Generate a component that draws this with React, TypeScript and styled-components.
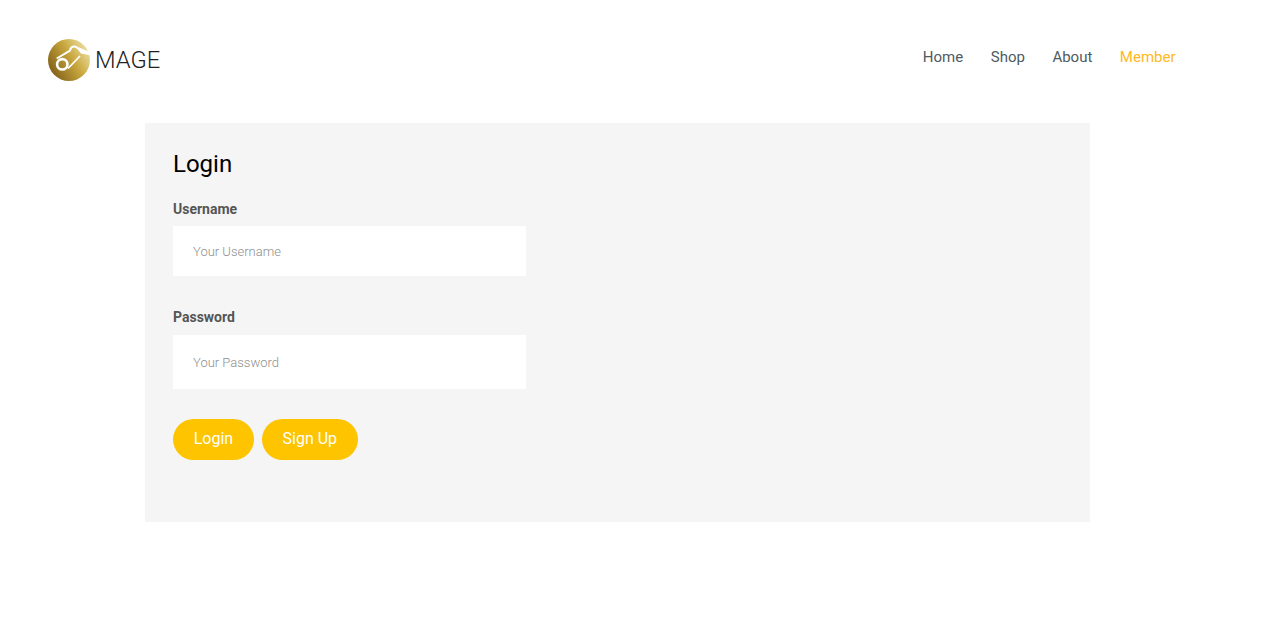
import React from "react";
import styled, { createGlobalStyle } from "styled-components";

const Global = createGlobalStyle`
  html, body { margin: 0; padding: 0; background: #fff; }
  body { font-family: Roboto, "Liberation Sans", sans-serif; }
  * { box-sizing: border-box; }
`;

const Page = styled.div`
  width: 1280px;
  height: 623px;
  overflow: hidden;
  background: #fff;
`;

const Header = styled.header`
  height: 123px;
  padding: 39px 104.5px 0 48px;
  display: flex;
  justify-content: space-between;
  align-items: flex-start;
`;

const Logo = styled.div`
  display: flex;
  align-items: center;
  gap: 5px;
  height: 42px;
`;

const LogoWord = styled.span`
  font-size: 23.8px;
  font-weight: 300;
  color: #222;
  line-height: 44px;
`;

const Nav = styled.nav`
  display: flex;
  gap: 27.5px;
  padding-top: 8px;
`;

const NavLink = styled.a<{ $active?: boolean }>`
  font-size: 15px;
  line-height: 20px;
  color: ${(p) => (p.$active ? "#ffb822" : "#4f5a62")};
`;

const Card = styled.main`
  width: 945px;
  height: 399px;
  margin-left: 145px;
  padding: 26px 28px 0;
  background: #f5f5f5;
`;

const Title = styled.h1`
  margin: 0 0 20px;
  font-size: 24px;
  font-weight: 400;
  line-height: 30px;
  color: #000;
`;

const Label = styled.label`
  display: block;
  font-size: 14px;
  font-weight: 700;
  line-height: 20px;
  color: #555;
  margin-bottom: 8px;
`;

const UsernameLabel = styled(Label)`
  margin-bottom: 7px;
`;

const Field = styled.div<{ $gap: number }>`
  margin-bottom: ${(p) => p.$gap}px;
`;

const Input = styled.input<{ $h: number }>`
  display: block;
  width: 353px;
  height: ${(p) => p.$h}px;
  padding: 0 20px;
  border: 0;
  outline: 0;
  background: #fff;
  font-family: Roboto, sans-serif;
  font-size: 13px;
  font-weight: 300;
  &::placeholder { color: #8f8f8f; opacity: 1; }
`;

const Buttons = styled.div`
  display: flex;
  gap: 8px;
`;

const Button = styled.button`
  height: 41px;
  padding: 0 20.7px 2px;
  border: 0;
  border-radius: 21px;
  background: #ffc400;
  color: #fff;
  font-family: Roboto, sans-serif;
  font-size: 16px;
  font-weight: 400;
`;

const LogoMark = () => (
  <svg width="42" height="42" viewBox="0 0 42 42">
    <defs>
      <linearGradient id="g" x1="0.95" y1="0.15" x2="0.05" y2="0.7">
        <stop offset="0" stopColor="#efe2a8" />
        <stop offset="0.45" stopColor="#c9a83f" />
        <stop offset="1" stopColor="#86651a" />
      </linearGradient>
    </defs>
    <circle cx="21" cy="21" r="21" fill="url(#g)" />
    <path
      d="M8.7 19.5 L22 11.7 Q22.5 8.2 25.5 7.6 Q27.5 7.4 29 8.6 L43 14.5"
      fill="none"
      stroke="#fff"
      strokeWidth="2"
    />
    <path d="M29 9.5 L43 15 L43 16.5 L33 14.5 Z" fill="#fff" />
    <path d="M20 29.5 L32 17" fill="none" stroke="#fff" strokeWidth="1.8" />
    <circle cx="14.3" cy="25.3" r="5.2" fill="none" stroke="#fff" strokeWidth="2.6" />
  </svg>
);

export default function App() {
  return (
    <Page>
      <Global />
      <Header>
        <Logo>
          <LogoMark />
          <LogoWord>MAGE</LogoWord>
        </Logo>
        <Nav>
          <NavLink>Home</NavLink>
          <NavLink>Shop</NavLink>
          <NavLink>About</NavLink>
          <NavLink $active>Member</NavLink>
        </Nav>
      </Header>
      <Card>
        <Title>Login</Title>
        <Field $gap={31}>
          <UsernameLabel>Username</UsernameLabel>
          <Input $h={50} placeholder="Your Username" />
        </Field>
        <Field $gap={30}>
          <Label>Password</Label>
          <Input $h={54} type="password" placeholder="Your Password" />
        </Field>
        <Buttons>
          <Button>Login</Button>
          <Button>Sign Up</Button>
        </Buttons>
      </Card>
    </Page>
  );
}
